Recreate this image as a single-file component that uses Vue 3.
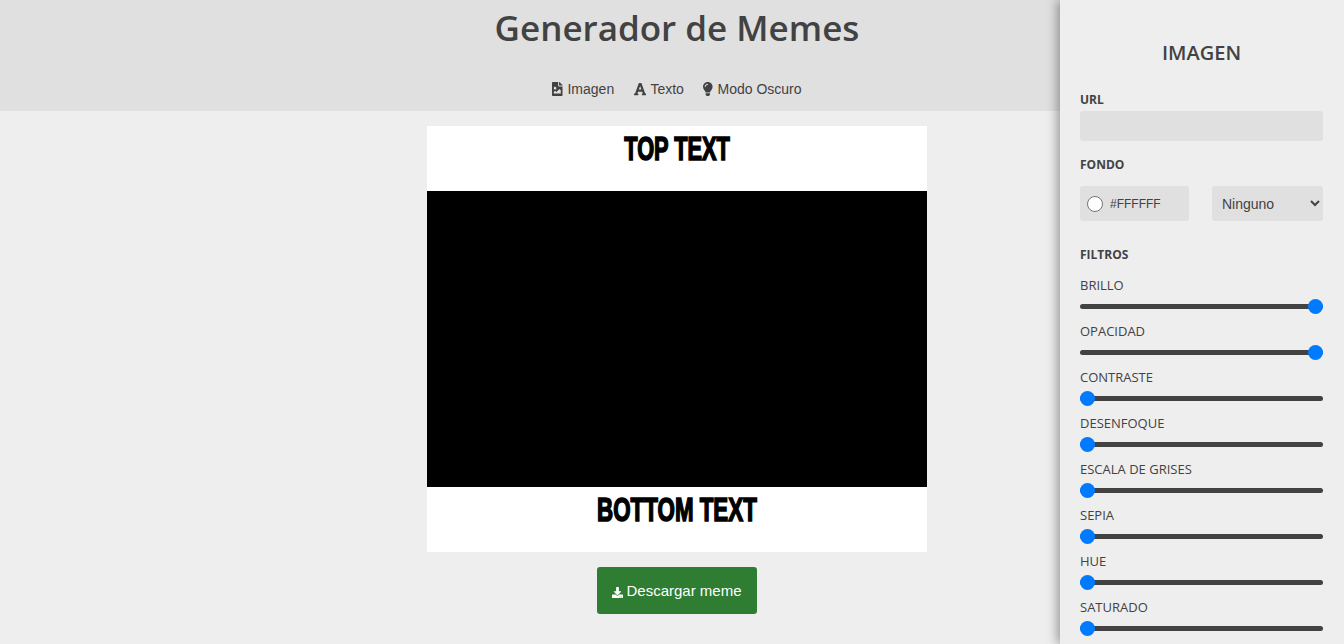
<script setup>
const filters = [
  { name: 'BRILLO', value: 100 },
  { name: 'OPACIDAD', value: 100 },
  { name: 'CONTRASTE', value: 0 },
  { name: 'DESENFOQUE', value: 0 },
  { name: 'ESCALA DE GRISES', value: 0 },
  { name: 'SEPIA', value: 0 },
  { name: 'HUE', value: 0 },
  { name: 'SATURADO', value: 0 },
]
</script>

<template>
  <div class="page">
    <main class="main">
      <header class="header">
        <h1>Generador de Memes</h1>
        <nav class="nav">
          <a class="nav-link">
            <svg class="icon icon-file" viewBox="0 0 384 512"><path d="M384 121.941V128H256V0h6.059a24 24 0 0 1 16.97 7.029l97.941 97.941a24.002 24.002 0 0 1 7.03 16.971zM248 160c-13.2 0-24-10.8-24-24V0H24C10.745 0 0 10.745 0 24v464c0 13.255 10.745 24 24 24h336c13.255 0 24-10.745 24-24V160H248zm-135.455 16c26.51 0 48 21.49 48 48s-21.49 48-48 48-48-21.49-48-48 21.491-48 48-48zm208 240h-256l.485-48.485L104.545 328c4.686-4.686 11.799-4.201 16.485.485L160.545 368 264.06 264.485c4.686-4.686 12.284-4.686 16.971 0L320.545 304v112z"/></svg>
            Imagen
          </a>
          <a class="nav-link">
            <svg class="icon icon-font" viewBox="0 0 448 512"><path d="M432 416h-23.41L277.88 53.69A32 32 0 0 0 247.58 32h-47.16a32 32 0 0 0-30.3 21.69L39.41 416H16a16 16 0 0 0-16 16v32a16 16 0 0 0 16 16h128a16 16 0 0 0 16-16v-32a16 16 0 0 0-16-16h-19.6l23.3-64h152.6l23.3 64H304a16 16 0 0 0-16 16v32a16 16 0 0 0 16 16h128a16 16 0 0 0 16-16v-32a16 16 0 0 0-16-16zM176.85 272L224 142.51 271.15 272z"/></svg>
            Texto
          </a>
          <a class="nav-link">
            <svg class="icon icon-bulb" viewBox="0 0 352 512"><path d="M96.06 454.35c.01 6.29 1.87 12.45 5.36 17.69l17.09 25.69a31.99 31.99 0 0 0 26.64 14.28h61.71a31.99 31.99 0 0 0 26.64-14.28l17.09-25.69a31.989 31.989 0 0 0 5.36-17.69l.04-38.35H96.01l.05 38.35zM0 176c0 44.37 16.45 84.85 43.56 115.78 16.52 18.85 42.36 58.23 52.21 91.45.04.26.07.52.11.78h160.24c.04-.26.07-.51.11-.78 9.85-33.22 35.69-72.6 52.21-91.45C335.55 260.85 352 220.37 352 176 352 78.61 272.91-.3 175.45 0 73.44.31 0 82.97 0 176zm176-80c-44.11 0-80 35.89-80 80 0 8.84-7.16 16-16 16s-16-7.16-16-16c0-61.76 50.24-112 112-112 8.84 0 16 7.16 16 16s-7.16 16-16 16z"/></svg>
            Modo Oscuro
          </a>
        </nav>
      </header>

      <section class="meme">
        <div class="meme-band"><span class="meme-text">TOP TEXT</span></div>
        <div class="meme-image"></div>
        <div class="meme-band"><span class="meme-text bottom-text">BOTTOM TEXT</span></div>
      </section>

      <button class="download">
        <svg class="icon-small" viewBox="0 0 512 512"><path d="M216 0h80c13.3 0 24 10.7 24 24v168h87.7c17.8 0 26.7 21.5 14.1 34.1L269.7 378.3c-7.5 7.5-19.8 7.5-27.3 0L90.1 226.1c-12.6-12.6-3.7-34.1 14.1-34.1H192V24c0-13.3 10.7-24 24-24zm296 376v112c0 13.3-10.7 24-24 24H24c-13.3 0-24-10.7-24-24V376c0-13.3 10.7-24 24-24h146.7l49 49c20.1 20.1 52.5 20.1 72.6 0l49-49H488c13.3 0 24 10.7 24 24zm-124 88c0-11-9-20-20-20s-20 9-20 20 9 20 20 20 20-9 20-20zm64 0c0-11-9-20-20-20s-20 9-20 20 9 20 20 20 20-9 20-20z"/></svg>
        Descargar meme
      </button>
    </main>

    <aside class="panel">
      <h2>IMAGEN</h2>
      <label class="field-label">URL</label>
      <input class="url-input" type="text" />

      <label class="field-label fondo">FONDO</label>
      <div class="fondo-row">
        <div class="color-box">
          <span class="swatch"></span>
          <span>#FFFFFF</span>
        </div>
        <select class="blend-select">
          <option>Ninguno</option>
        </select>
      </div>

      <label class="field-label filtros">FILTROS</label>
      <div v-for="filter in filters" :key="filter.name" class="filter">
        <span class="filter-name">{{ filter.name }}</span>
        <input class="slider" type="range" min="0" max="100" :value="filter.value" />
      </div>
    </aside>
  </div>
</template>

<style>
html,
body {
  margin: 0;
  overflow: hidden;
}
</style>

<style scoped>
.page {
  position: relative;
  height: 644px;
  overflow: hidden;
  background: #eeeeee;
  color: #424242;
  font-family: "Open Sans", sans-serif;
}

.main {
  display: flex;
  flex-direction: column;
  align-items: center;
  padding-left: 10px;
}

.header {
  align-self: stretch;
  margin-left: -10px;
  padding-left: 10px;
  height: 111px;
  background: #e0e0e0;
  text-align: center;
}

.header h1 {
  margin: 0;
  padding-top: 4px;
  font-size: 35px;
  line-height: 48px;
  font-weight: 600;
}

.nav {
  display: flex;
  justify-content: center;
  gap: 19.5px;
  margin-top: 28px;
  font-family: "Liberation Sans", sans-serif;
  font-size: 14px;
  line-height: 18px;
}

.nav-link {
  display: flex;
  align-items: center;
  gap: 4.5px;
}

.icon {
  height: 14px;
  fill: #424242;
}

.icon-file {
  width: 10.5px;
}

.icon-font {
  width: 12.25px;
}

.icon-bulb {
  width: 9.6px;
}

.meme {
  width: 500px;
  margin-top: 15px;
  background: #fff;
}

.meme-band {
  height: 65px;
  padding-top: 4px;
  box-sizing: border-box;
  text-align: center;
}

.meme-text {
  display: inline-block;
  transform: scaleX(0.66);
  font-family: "Liberation Sans", sans-serif;
  font-size: 33px;
  line-height: 37px;
  font-weight: 700;
  color: #000;
  white-space: nowrap;
  -webkit-text-stroke: 1.6px #000;
}

.bottom-text {
  transform: scaleX(0.677);
}

.meme-image {
  height: 296px;
  background: #000;
}

.download {
  display: flex;
  align-items: center;
  justify-content: center;
  gap: 3px;
  width: 160px;
  height: 47px;
  margin-top: 15px;
  border: none;
  border-radius: 3px;
  background: #2e7d32;
  color: #fff;
  font-family: "Liberation Sans", sans-serif;
  font-size: 15px;
}

.icon-small {
  width: 11px;
  height: 11px;
  margin-top: 3px;
  fill: #fff;
}

.panel {
  position: absolute;
  top: 0;
  right: 0;
  bottom: 0;
  width: 284px;
  box-sizing: border-box;
  padding: 0 21px 0 20px;
  background: #eeeeee;
  box-shadow: -3px 0 10px rgba(0, 0, 0, 0.35);
  display: flex;
  flex-direction: column;
}

.panel h2 {
  margin: 0;
  padding-top: 39px;
  font-size: 20px;
  line-height: 27px;
  font-weight: 600;
  text-align: center;
}

.field-label {
  display: block;
  margin-top: 26px;
  font-size: 12px;
  line-height: 16px;
  font-weight: 700;
}

.url-input {
  height: 30px;
  margin-top: 3px;
  padding: 0 10px;
  box-sizing: border-box;
  border: none;
  border-radius: 3px;
  background: #e0e0e0;
  flex-shrink: 0;
}

.fondo {
  margin-top: 16px;
}

.fondo-row {
  display: flex;
  justify-content: space-between;
  margin-top: 13px;
  flex-shrink: 0;
}

.color-box {
  display: flex;
  align-items: center;
  gap: 7px;
  width: 109px;
  height: 35px;
  padding-left: 7px;
  box-sizing: border-box;
  border-radius: 3px;
  background: #e0e0e0;
  font-family: "Liberation Sans", sans-serif;
  font-size: 12px;
}

.swatch {
  width: 14px;
  height: 14px;
  border: 1px solid #767676;
  border-radius: 50%;
  background: #fff;
}

.blend-select {
  width: 111px;
  height: 35px;
  padding: 0 5px 0 6px;
  border: none;
  border-radius: 3px;
  background: #e0e0e0;
  color: #424242;
  font-family: "Liberation Sans", sans-serif;
  font-size: 14px;
}

.filtros {
  margin-top: 26px;
  margin-bottom: 14px;
}

.filter {
  display: flex;
  flex-direction: column;
  height: 46px;
  flex-shrink: 0;
}

.filter-name {
  font-size: 13px;
  line-height: 16px;
}

.slider {
  appearance: none;
  -webkit-appearance: none;
  width: 100%;
  height: 5px;
  margin: 11px 0 0;
  border-radius: 3px;
  background: #424242;
}

.slider::-webkit-slider-thumb {
  -webkit-appearance: none;
  width: 15px;
  height: 15px;
  border-radius: 50%;
  background: #007bff;
}
</style>
